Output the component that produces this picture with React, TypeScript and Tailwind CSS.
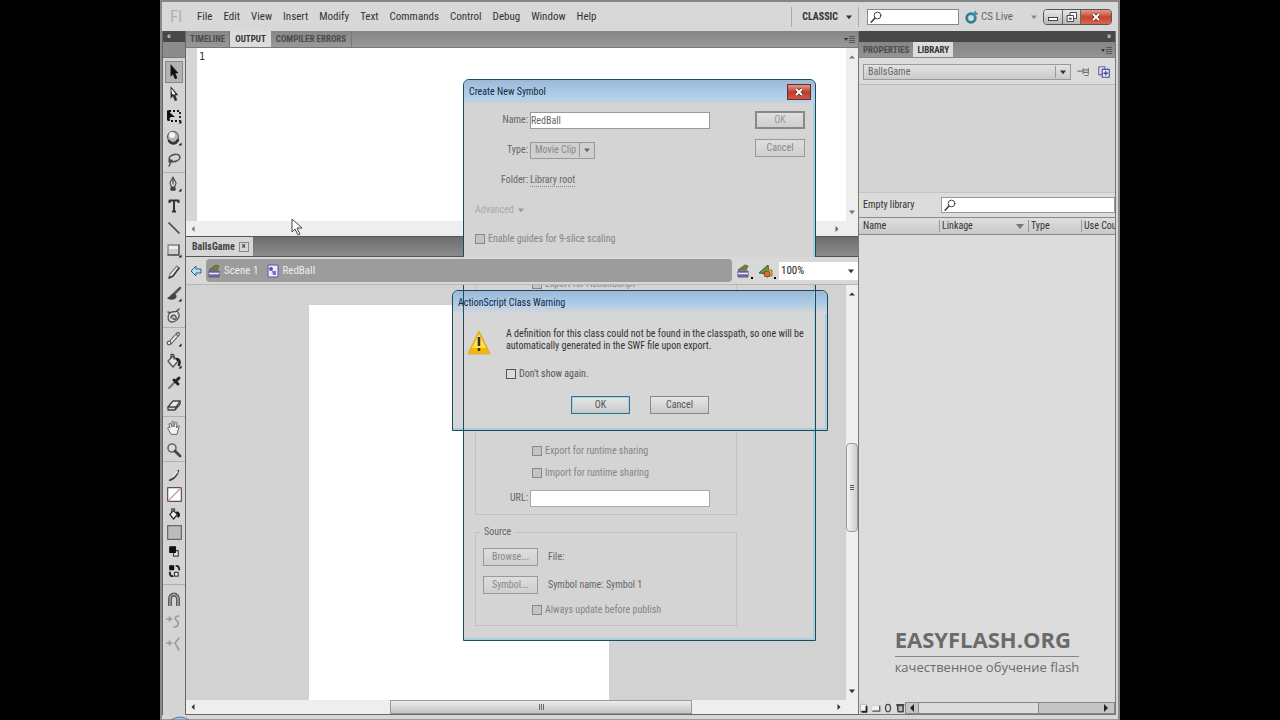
import type { ReactNode } from 'react';

const menus = ['File', 'Edit', 'View', 'Insert', 'Modify', 'Text', 'Commands', 'Control', 'Debug', 'Window', 'Help'];

function Svg({ children, className = 'h-4 w-4' }: { children: ReactNode; className?: string }) {
  return (
    <svg viewBox="0 0 16 16" className={className} fill="none" stroke="#444" strokeWidth="1.3" strokeLinecap="round" strokeLinejoin="round" aria-hidden="true">
      {children}
    </svg>
  );
}

const arrowPoints = {
  left: '6,0 6,8 2,4',
  right: '2,0 2,8 6,4',
  up: '0,6 8,6 4,2',
  down: '0,2 8,2 4,7',
};

function Arrow({ dir, className = 'h-1.5 w-1.5 text-[#333]' }: { dir: keyof typeof arrowPoints; className?: string }) {
  return (
    <svg viewBox="0 0 8 8" className={`shrink-0 ${className}`} aria-hidden="true">
      <polygon points={arrowPoints[dir]} fill="currentColor" />
    </svg>
  );
}

function PanelMenu() {
  return (
    <button aria-label="Panel menu" className="ml-auto mr-0.5">
      <svg viewBox="0 0 12 8" className="h-2 w-3" aria-hidden="true">
        <path d="M0 3h4L2 6z" fill="#333" />
        <path d="M5 1.5h6M5 3.5h6M5 5.5h6M5 7.5h6" stroke="#555" />
      </svg>
    </button>
  );
}

function SearchIcon() {
  return (
    <Svg className="h-3 w-3 shrink-0">
      <circle cx="10" cy="6" r="4.5" />
      <path d="M6.5 9.5L1.5 15" strokeWidth="2" />
    </Svg>
  );
}

function CloseCross() {
  return (
    <svg viewBox="0 0 10 8" className="h-2 w-2.5" aria-hidden="true">
      <path d="M2 1l6 6M8 1L2 7" stroke="#5a2020" strokeWidth="3.4" />
      <path d="M2 1l6 6M8 1L2 7" stroke="#fff" strokeWidth="2" />
    </svg>
  );
}

/* Top menu bar */
function MenuBar() {
  return (
    <header className="flex h-[31px] shrink-0 items-center border-t-2 border-[#858585] bg-[#d8d8d8] pr-1.5 pl-2">
      <span className="w-[27px] text-[17px] text-[#b0b0b0]">Fl</span>
      <nav className="flex gap-[11px] text-[11px] text-[#333]">
        {menus.map((m) => (
          <button key={m}>{m}</button>
        ))}
      </nav>
      <div className="ml-auto flex items-center">
        <button className="flex h-5 items-center gap-2 border-x border-[#aaa] pr-1.5 pl-2.5 text-[10px] font-bold text-[#333]">
          CLASSIC <Arrow dir="down" />
        </button>
        <label className="ml-2 flex h-4 w-[92px] items-center border border-[#888] bg-white pl-0.5">
          <SearchIcon />
          <input aria-label="Search help" className="w-full min-w-0 outline-none" />
        </label>
        <button className="ml-1.5 flex items-center gap-0.5 text-[11px] text-[#666]">
          <svg viewBox="0 0 14 14" className="h-3.5 w-3.5" aria-hidden="true">
            <circle cx="6" cy="8" r="4.3" fill="none" stroke="#2b8298" strokeWidth="2.8" />
            <path d="M10 1l1 2 2 .5-2 1-1 2-.6-2z" fill="#3c95b5" stroke="#3c95b5" />
          </svg>
          <span>CS Live</span>
          <Arrow dir="down" className="ml-4 h-1.5 w-1.5 text-[#888]" />
        </button>
        <div className="ml-1.5 flex h-4 overflow-hidden rounded-sm border border-[#555]">
          <button aria-label="Minimize" className="flex w-[18px] items-center justify-center bg-linear-to-b from-[#e8e8e8] to-[#b8b8b8]">
            <span className="mt-1 h-1 w-2.5 border border-[#444] bg-white" />
          </button>
          <button aria-label="Restore" className="flex w-[19px] items-center justify-center border-x border-[#666] bg-linear-to-b from-[#e8e8e8] to-[#b8b8b8]">
            <Svg className="h-3 w-3">
              <path d="M6 2h8v8H6z" fill="#fff" />
              <path d="M2 6h8v8H2z" fill="#fff" />
              <path d="M5 9.5h2v1.500H5z" />
            </Svg>
          </button>
          <button aria-label="Close" className="flex w-[30px] items-center justify-center bg-linear-to-b from-[#dc9a8c] via-[#c8432c] to-[#d6684e]">
            <CloseCross />
          </button>
        </div>
      </div>
    </header>
  );
}

function Corner() {
  return <path d="M15.500 12.500v3h-3z" fill="#111" stroke="none" />;
}

const toolGroups: { name: string; icon: ReactNode }[][] = [
  [
    { name: 'Selection', icon: <path d="M5 1l7 8H9l2 5-2 .8L7 10l-2 2z" fill="#111" stroke="#111" strokeWidth=".6" /> },
    { name: 'Subselection', icon: <><path d="M5 1l7 8H9l2 5-2 .8L7 10l-2 2z" fill="#222" strokeWidth=".6" /><path d="M6 4l3 4H7z" fill="#fff" stroke="#fff" strokeWidth="1" /></> },
    { name: 'Free Transform', icon: <><path d="M3 3h11v10H3z" strokeDasharray="2 2" strokeLinecap="butt" stroke="#111" strokeWidth="1.800" /><path d="M1 2l8 7H5l-4 4z" fill="#111" stroke="none" /><Corner /></> },
    { name: '3D Rotation', icon: <><circle cx="7" cy="7" r="5.500" fill="#b5b5b5" stroke="#666" /><circle cx="6" cy="5" r="3" fill="#f4f4f4" stroke="none" /><path d="M3 11c3 4 7 3 9-1" stroke="#333" strokeWidth="2.500" /><Corner /></> },
    { name: 'Lasso', icon: <><ellipse cx="8.500" cy="6" rx="5.500" ry="3.500" transform="rotate(-15 8.500 6)" stroke="#555" strokeWidth="1.600" /><path d="M4 8c-2 1-1 3 1 2s1-2-.500-2M4 10c1 2 0 3-1 4" /></> },
  ],
  [
    { name: 'Pen', icon: <><path d="M7 1l3 6-1.500 4h-3L4 7z" fill="#eee" stroke="#555" /><path d="M7 3v5" /><path d="M5 12h4v2H5z" fill="#333" /><Corner /></> },
    { name: 'Text', icon: <path d="M3.500 5V2.500h9V5M8 3v10.500M6 13.500h4" stroke="#333" strokeWidth="2" strokeLinecap="butt" /> },
    { name: 'Line', icon: <path d="M3 3l10 10" strokeWidth="1.600" /> },
    { name: 'Rectangle', icon: <><path d="M2 3h11v10H2z" fill="#ccc" stroke="#888" /><path d="M3 4h9v3H3z" fill="#eee" stroke="none" /><path d="M2 13h11V3" stroke="#555" /><Corner /></> },
    { name: 'Pencil', icon: <><path d="M3 14l1-4 7-8 2 2-6 8z" fill="#eee" stroke="#888" /><path d="M3 14l4-2 6-8" stroke="#333" strokeWidth="1.400" /></> },
    { name: 'Brush', icon: <><path d="M14 2L8 8" strokeWidth="2.500" stroke="#555" /><path d="M8 8c-3 0-3 4-6 4 3 2 8 1 8-2z" fill="#444" /><Corner /></> },
    { name: 'Deco', icon: <><path d="M3 6c2-4 5-1 8-3l2 3c1 5-4 8-7 8-4 0-5-5-3-8z" fill="#ddd" stroke="#555" /><path d="M5 10c0-3 4-4 5-1s-3 3-3 1M11 3l2-2M4 5L2 4" stroke="#555" strokeWidth="1.500" /></> },
  ],
  [
    { name: 'Bone', icon: <><path d="M4 12l7-8" stroke="#555" strokeWidth="4" /><path d="M4 12l7-8" stroke="#e6e6e6" strokeWidth="2" /><circle cx="12" cy="3" r="1.500" fill="#eee" stroke="#666" /><circle cx="3" cy="12" r="1.800" fill="#eee" stroke="#666" /><Corner /></> },
    { name: 'Paint Bucket', icon: <><path d="M2 8l5-5 5 5-5 6z" fill="#e6e6e6" stroke="#555" /><path d="M5 5V2c0-1 3-1 3 1v3" /><path d="M11 6c3 1 3 3 2 6" stroke="#222" strokeWidth="2.500" /><Corner /></> },
    { name: 'Eyedropper', icon: <><path d="M3 13l6-6" strokeWidth="2" stroke="#777" /><path d="M8 5l4 4M10 6l3-3" stroke="#222" strokeWidth="3" /></> },
    { name: 'Eraser', icon: <><path d="M2 10l5-6h7l-4 6z" fill="#eee" /><path d="M2 10v3h7l5-6V4M10 10l-1 3" /></> },
  ],
  [
    { name: 'Hand', icon: <path d="M5 14L2 9c-1-2 1-2 2-1L3 4c0-1 1.500-1 2 0l1 3V2c0-1 2-1 2 0v5l1-4c0-1 2-1 2 0l-.500 5 1.500-2c1-1 2 0 1 1l-2 7z" fill="#f3f3f3" strokeWidth="1" stroke="#666" /> },
    { name: 'Zoom', icon: <><circle cx="6" cy="6" r="4" fill="#ddd" stroke="#666" strokeWidth="1.600" /><path d="M9 9l5 5" strokeWidth="2.800" /></> },
  ],
  [
    { name: 'Stroke Color', icon: <><path d="M3 13c4-1 8-5 9-10" strokeWidth="2" /><path d="M7 9l4-5" stroke="#eee" /></> },
    { name: 'Stroke Swatch', icon: <><path d="M.700.700h14.600v14.600H.700z" fill="#fff" stroke="#555" /><path d="M1 15L15 1" stroke="#c98b91" /></> },
    { name: 'Fill Color', icon: <><path d="M3 9l4-4 4 4-4 5z" fill="#eee" stroke="#222" /><path d="M5 6V3h3v3" /><path d="M11 7c2 1 2 3 1 4" stroke="#111" strokeWidth="2.500" /></> },
    { name: 'Fill Swatch', icon: <path d="M.700.700h14.600v14.600H.700z" fill="#bcbcbc" stroke="#666" /> },
    { name: 'Black and White', icon: <><path d="M7 7h5v6H7z" fill="#eee" /><path d="M3 3h6v6H3z" fill="#111" stroke="#111" /></> },
    { name: 'Swap Colors', icon: <><path d="M3 3h4v4H3z" fill="#111" stroke="#111" /><path d="M8 10h4v4H8z" fill="#eee" /><path d="M10 3c3 0 3 3 3 4M3 10c0 3 1 4 3 4" stroke="#222" strokeWidth="2" /></> },
  ],
  [
    { name: 'Snap to Objects', icon: <><path d="M4 14V7c0-6 8-6 8 0v7" stroke="#5c5c5c" strokeWidth="4" strokeLinecap="butt" /><path d="M4 14V7c0-6 8-6 8 0v7" stroke="#c4c4c4" strokeWidth="1" /></> },
    { name: 'Smooth', icon: <path d="M1 5h5M3.500 3v4M13 2c-5 0-4 4-2 5s2 6-3 6" stroke="#999" strokeWidth="1.600" /> },
    { name: 'Straighten', icon: <path d="M1 7h5M3.500 5v4M13 2L9 7l4 7" stroke="#999" strokeWidth="1.600" /> },
  ],
];

/* Vertical tool strip */
function Toolbar() {
  return (
    <aside className="flex w-6 shrink-0 flex-col border-x border-[#666] bg-[#d4d4d4]">
      <div className="h-[11px] bg-[#484848] pl-1 text-[9px] leading-[10px] font-bold text-[#ddd]">«</div>
      <div className="h-4 border-b border-[#777] bg-[#8c8c8c]" />
      <div className="pt-[3px]">
        {toolGroups.map((group, g) => (
          <div key={g} className={g === 0 ? 'pb-px' : g > 3 ? 'border-t border-[#b0b0b0] py-1' : 'border-t border-[#b0b0b0]'}>
            {group.map((tool) => (
              <button
                key={tool.name}
                aria-label={tool.name}
                className={`mx-auto flex w-[18px] items-center justify-center ${g === 4 ? 'h-[19px]' : 'h-[22px]'} ${tool.name === 'Selection' ? 'border border-[#888] bg-[#b2b2b2]' : ''}`}
              >
                <Svg className={g === 4 ? 'h-[15px] w-[15px]' : 'h-4 w-4 shrink-0'}>{tool.icon}</Svg>
              </button>
            ))}
          </div>
        ))}
      </div>
    </aside>
  );
}

function OutputPanel() {
  return (
    <section className="flex h-[206px] shrink-0 flex-col">
      <div role="tablist" className="flex h-[17px] items-stretch border-b border-[#777] bg-linear-to-b from-[#868686] to-[#999] text-[9px] font-bold text-[#4c4c4c]">
        <button role="tab" className="border-r border-[#777] px-1">TIMELINE</button>
        <button role="tab" aria-selected="true" className="bg-[#dcdcdc] px-[5px] text-[#333]">OUTPUT</button>
        <button role="tab" className="border-r border-[#777] px-[5px]">COMPILER ERRORS</button>
        <PanelMenu />
      </div>
      <div className="flex min-h-0 flex-1">
        <div className="w-[11px] bg-[#d6d6d6]" />
        <pre className="flex-1 bg-white pt-1 pl-0.5 font-['DejaVu_Sans_Mono',monospace] text-[10px] text-[#333]">1</pre>
        <div className="flex w-3 flex-col items-center justify-between bg-[#eee] py-1.5">
          <Arrow dir="up" className="h-1.5 w-1.5 text-[#777]" />
          <Arrow dir="down" className="h-1.5 w-1.5 text-[#777]" />
        </div>
      </div>
      <div className="flex h-4 items-center justify-between border-b border-[#555] bg-[#eee] pr-[18px] pl-1">
        <Arrow dir="left" className="h-1.5 w-1.5 text-[#777]" />
        <Arrow dir="right" className="h-1.5 w-1.5 text-[#666]" />
      </div>
    </section>
  );
}

function Clapper() {
  return (
    <svg viewBox="0 0 16 16" className="h-4 w-4 shrink-0" aria-hidden="true">
      <path d="M3 7l7-5 3 1-2 4z" fill="#70833a" stroke="#5c6b32" />
      <path d="M3 8h10v6H3z" fill="#7168a8" stroke="#5c5695" />
      <path d="M3 10.500h10" stroke="#eee" strokeWidth="1.500" />
    </svg>
  );
}

function EditBar() {
  return (
    <div className="relative z-20 flex h-7 shrink-0 items-center border-b border-[#b9b6ab] bg-[#d8d8d8] text-[11px]">
      <button aria-label="Back" className="flex w-5 justify-center">
        <svg viewBox="0 0 12 12" className="h-3 w-3" aria-hidden="true">
          <path d="M1 6l5-5v3h5v4H6v3z" fill="#b9dcef" stroke="#2d6788" />
        </svg>
      </button>
      <div className="flex h-[23px] flex-1 items-center gap-0.5 rounded-sm bg-[#9c9c9c] text-[#eee]">
        <Clapper />
        <a href="#scene" className="mr-1.5">Scene 1</a>
        <svg viewBox="0 0 14 14" className="h-3.5 w-3.5" aria-hidden="true">
          <path d="M2 1h10v12H2z" fill="#e9e9f7" stroke="#5b57a8" />
          <circle cx="5" cy="5" r="2" fill="#5b57a8" />
          <path d="M6 7h4v4H7z" fill="#7773bd" />
        </svg>
        <a href="#redball">RedBall</a>
      </div>
      <div className="flex w-[47px] items-center justify-around">
        <button aria-label="Edit Scene" className="flex items-end"><Clapper /><span className="h-0.5 w-0.5 bg-black" /></button>
        <button aria-label="Edit Symbols" className="flex items-end">
          <svg viewBox="0 0 16 16" className="h-4 w-4" aria-hidden="true">
            <path d="M1 10l9-8 1 9z" fill="#5a9a45" stroke="#2f6a2d" />
            <path d="M7 7h7v6H7z" fill="#ddc341" stroke="#8b7425" />
            <circle cx="9" cy="11" r="3" fill="#d9712f" stroke="#8c4218" />
          </svg>
          <span className="h-0.5 w-0.5 bg-black" />
        </button>
      </div>
      <div className="flex h-[18px] w-[79px] items-center bg-white pr-1 pl-0.5">
        <select aria-label="Zoom" className="flex-1 appearance-none text-[#222] outline-none">
          <option>100%</option>
        </select>
        <Arrow dir="down" />
      </div>
    </div>
  );
}

function Stage() {
  return (
    <section className="flex min-h-0 flex-1 flex-col border-b border-[#666] bg-[#d2d2d2]">
      <div className="flex min-h-0 flex-1">
        <div className="flex flex-1 pt-5 pl-[123px]">
          <div className="w-[300px] bg-white" />
        </div>
        <div className="flex w-3 flex-col items-center bg-[#eee] pt-1.5 pb-1.5">
          <Arrow dir="up" />
          <div className="flex-[146]" />
          <div className="flex w-full flex-[88] flex-col items-center justify-center gap-px rounded-sm border border-[#999] bg-linear-to-r from-[#f4f4f4] to-[#cfcfcf]">
            <span className="h-px w-1 bg-[#555]" />
            <span className="h-px w-1 bg-[#555]" />
            <span className="h-px w-1 bg-[#555]" />
          </div>
          <div className="flex-[156]" />
          <Arrow dir="down" />
        </div>
      </div>
      <div className="flex h-3.5 items-center bg-[#eee] pr-4 pl-1">
        <Arrow dir="left" />
        <div className="flex-[195]" />
        <div className="flex h-3.5 flex-[301] items-center justify-center gap-px border border-[#999] bg-linear-to-b from-[#eee] to-[#c4c4c4]">
          <span className="h-1.5 w-px bg-[#666]" />
          <span className="h-1.5 w-px bg-[#666]" />
          <span className="h-1.5 w-px bg-[#666]" />
        </div>
        <div className="flex-[144]" />
        <Arrow dir="right" />
      </div>
    </section>
  );
}

function LibraryPanel() {
  return (
    <aside className="flex w-[258px] shrink-0 flex-col border-x border-b border-[#777] bg-[#dcdcdc] text-[10px] text-[#333]">
      <div className="h-[11px] bg-[#484848] pr-1 text-right text-[9px] leading-[10px] font-bold text-[#ddd]">»</div>
      <div role="tablist" className="flex h-4 items-stretch border-b border-[#888] bg-linear-to-b from-[#868686] to-[#949494] text-[9px] font-bold text-[#4c4c4c]">
        <button role="tab" className="px-1 pt-0.5">PROPERTIES</button>
        <button role="tab" aria-selected="true" className="bg-[#dcdcdc] px-1 pt-0.5 text-[#333]">LIBRARY</button>
        <PanelMenu />
      </div>
      <div className="flex h-[27px] items-center border-b border-[#bbb] px-1 pt-0.5">
        <div className="flex h-4 flex-1 items-center border border-[#999] bg-linear-to-b from-[#e2e2e2] to-[#cbcbcb] pr-1 pl-1">
          <select aria-label="Library document" className="flex-1 appearance-none text-[#666] outline-none">
            <option>BallsGame</option>
          </select>
          <span className="mr-1 h-3 w-px bg-[#999]" />
          <Arrow dir="down" />
        </div>
        <button aria-label="Pin library" className="ml-1.5">
          <Svg className="h-3.5 w-3.5"><path d="M1 7h6M7 4v6M7 5.500h6M7 8.500h6M13 4v6M9 12h4" stroke="#777" /></Svg>
        </button>
        <button aria-label="New library panel" className="ml-1.5">
          <Svg className="h-3.5 w-3.5"><path d="M2 2h7v9H2z" fill="#ddd" stroke="#6a6ab0" /><path d="M6 5h8v9H6z" fill="#eeeef8" stroke="#4848a0" /><path d="M8 9.500h4M10 7.500v4" stroke="#4848a0" strokeWidth="1.600" /></Svg>
        </button>
      </div>
      <div className="h-[107px] bg-[#d4d4d4]" />
      <div className="flex h-[25px] items-center justify-between border-t border-[#c4c4c4] pl-1">
        <span>Empty library</span>
        <label className="flex h-4 w-[174px] items-center border border-[#999] bg-white pl-0.5">
          <SearchIcon />
          <input aria-label="Search library" className="w-full min-w-0 outline-none" />
        </label>
      </div>
      <table className="w-full table-fixed border-y border-[#888] bg-linear-to-b from-[#dedede] to-[#c8c8c8] text-left">
        <thead>
          <tr className="h-4 leading-4">
            <th className="w-[80px] pl-1 font-normal">Name</th>
            <th className="w-[89px] font-normal">
              <div className="flex h-3 items-center justify-between border-l border-[#999] pr-1 pl-0.5">Linkage <Arrow dir="down" className="h-2 w-2 text-[#777]" /></div>
            </th>
            <th className="w-[53px] font-normal">
              <div className="flex h-3 items-center border-l border-[#999] pl-0.5">Type</div>
            </th>
            <th className="font-normal">
              <div className="flex h-3 items-center overflow-hidden border-l border-[#999] pl-0.5 whitespace-nowrap">Use Count</div>
            </th>
          </tr>
        </thead>
      </table>
      <div className="flex flex-1 flex-col items-center justify-end pb-[25px] font-['Open_Sans',sans-serif] text-[#6b6b6b]">
        <div>
          <p className="mb-1.5 text-[22px] leading-[22px] font-bold">EASYFLASH.ORG</p>
          <p className="border-t border-[#888] text-[13px] leading-5">качественное обучение flash</p>
        </div>
      </div>
      <div className="flex h-3 items-center">
        <button aria-label="New symbol" className="w-3"><Svg className="h-2.5 w-2.5"><path d="M3 2h9v12H3z" fill="#f4f4f4" stroke="#aaa" /><path d="M12 6v8H5" stroke="#222" strokeWidth="3" /></Svg></button>
        <button aria-label="New folder" className="w-3"><Svg className="h-2.5 w-2.5"><path d="M1 4h13v9H1z" fill="#eee" stroke="#ccc" /><path d="M14 5v8H3" stroke="#555" strokeWidth="2" /></Svg></button>
        <button aria-label="Item properties" className="w-3"><Svg className="h-2.5 w-2.5"><ellipse cx="8" cy="8" rx="4" ry="6" strokeWidth="2" /></Svg></button>
        <button aria-label="Delete" className="w-2.5"><Svg className="h-2.5 w-2.5"><path d="M4 4h9v10H5zM3 3h11" fill="#bbb" strokeWidth="2.500" /></Svg></button>
        <div className="flex h-3 flex-1 items-center border border-[#888] bg-[#c4c4c4] pr-1">
          <span className="flex h-full w-3 items-center justify-center"><Arrow dir="left" className="h-2 w-2 text-[#222]" /></span>
          <span className="h-full flex-[124] border-x border-[#888] bg-[#dcdcdc]" />
          <span className="flex-[66]" />
          <Arrow dir="right" className="h-2 w-2 text-[#222]" />
        </div>
      </div>
    </aside>
  );
}

function CheckRow({ id, label, className }: { id: string; label: string; className: string }) {
  return (
    <div className={`flex items-center gap-[3px] text-[#858585] ${className}`}>
      <input id={id} type="checkbox" disabled className="h-2.5 w-2.5 appearance-none border border-[#888] bg-[#c4c4c4]" />
      <label htmlFor={id}>{label}</label>
    </div>
  );
}

/* Create New Symbol */
function SymbolDialog() {
  const grayButton = 'h-[18px] border border-[#999] bg-linear-to-b from-[#dedede] to-[#cfcfcf] text-[#888]';
  return (
    <div role="dialog" aria-label="Create New Symbol" className="absolute top-[79px] left-[301px] z-10 w-[353px] rounded-t-md border border-[#1f4a5c] bg-[#d4d4d4] text-[10px] leading-3.5 text-[#666] shadow-[inset_-2px_-2px_0_#a5d0dc]">
      <div className="mb-0.5 flex h-[23px] items-center justify-between rounded-t-md bg-linear-to-b from-[#9db8d6] via-[#a9cbe8] to-[#bdd4e8] pr-1 pl-[5px] text-[#12283f]">
        Create New Symbol
        <button aria-label="Close" className="flex h-4 w-6 items-center justify-center border border-[#6b2a2a] bg-linear-to-b from-[#dc9a8c] via-[#c03a2c] to-[#cc5844]">
          <CloseCross />
        </button>
      </div>
      <div className="flex">
        <div className="flex-1">
          <div className="flex h-[30px] items-center gap-0.5">
            <label htmlFor="name" className="w-16 text-right">Name:</label>
            <input id="name" defaultValue="RedBall" className="h-[17px] w-[180px] border border-[#999] bg-white outline-none" />
          </div>
          <div className="flex h-[30px] items-center gap-0.5">
            <label htmlFor="type" className="w-16 text-right">Type:</label>
            <div className="flex h-[17px] items-center border border-[#999] bg-[#d0d0d0] pr-1 pl-1">
              <select id="type" disabled className="w-11 appearance-none text-[#888] opacity-100">
                <option>Movie Clip</option>
              </select>
              <span className="mr-1 h-3.5 w-px bg-[#999]" />
              <Arrow dir="down" className="h-1.5 w-1.5 text-[#666]" />
            </div>
          </div>
          <div className="flex h-[30px] items-center gap-0.5">
            <span className="w-16 text-right">Folder:</span>
            <a href="#folder" className="border-b border-dotted border-[#888] leading-3">Library root</a>
          </div>
          <button className="ml-[11px] flex h-[30px] items-center gap-1 text-[#aaa]">
            Advanced <Arrow dir="down" className="h-1.5 w-1.5 text-[#999]" />
          </button>
        </div>
        <div className="flex flex-col gap-2.5 pt-1.5 pr-2.5">
          <button disabled className="h-[18px] w-[50px] border-2 border-[#888] bg-linear-to-b from-[#dedede] to-[#cfcfcf] leading-3 text-[#999]">OK</button>
          <button disabled className={`w-[50px] ${grayButton}`}>Cancel</button>
        </div>
      </div>
      <CheckRow id="slice" label="Enable guides for 9-slice scaling" className="h-7 pl-[11px]" />
      <fieldset className="mt-1 mr-[78px] ml-[11px] h-[160px] border border-[#c2c2c2] pt-0.5">
        <legend className="ml-1 px-1">Linkage</legend>
        <CheckRow id="as" label="Export for ActionScript" className="h-[22px] pl-[56px]" />
      </fieldset>
      <fieldset className="mr-[78px] ml-[11px] h-[98px] border border-[#c2c2c2] pt-[9px]">
        <legend className="ml-1 px-1">Sharing</legend>
        <CheckRow id="exp" label="Export for runtime sharing" className="h-[22px] pl-[56px]" />
        <CheckRow id="imp" label="Import for runtime sharing" className="h-[22px] pl-[56px]" />
        <div className="flex h-7 items-center gap-0.5">
          <label htmlFor="url" className="w-[52px] text-right">URL:</label>
          <input id="url" disabled className="h-[17px] w-[180px] border border-[#aaa] bg-white" />
        </div>
      </fieldset>
      <fieldset className="mt-2.5 mr-[78px] mb-3.5 ml-[11px] border border-[#c2c2c2] pb-1">
        <legend className="ml-1 px-1">Source</legend>
        <div className="mt-1 flex h-7 items-center gap-2.5 pl-[7px]">
          <button disabled className={`w-[55px] ${grayButton}`}>Browse...</button> File:
        </div>
        <div className="flex h-7 items-center gap-2.5 pl-[7px]">
          <button disabled className={`w-[55px] ${grayButton}`}>Symbol...</button> Symbol name: Symbol 1
        </div>
        <CheckRow id="always" label="Always update before publish" className="h-[22px] pl-[56px]" />
      </fieldset>
    </div>
  );
}

/* ActionScript Class Warning */
function WarningDialog() {
  return (
    <div role="alertdialog" aria-label="ActionScript Class Warning" className="absolute top-[290px] left-[290px] z-30 w-[376px] rounded-t-md border border-[#1f4a5c] bg-[#d6d6d6] pb-4 text-[10px] leading-3 text-[#333] shadow-[inset_-2px_-2px_0_#a5d0dc]">
      <div className="flex h-[23px] items-center rounded-t-md bg-linear-to-b from-[#9db8d6] via-[#a9cbe8] to-[#d6d6d6] pl-[5px] text-[#12283f]">
        ActionScript Class Warning
      </div>
      <div className="flex pt-3.5 pl-3.5">
        <svg viewBox="0 0 24 26" className="mt-0.5 h-[26px] w-6 shrink-0" aria-hidden="true">
          <path d="M12 2L22.500 23.500h-21z" fill="#f5b800" stroke="#e8b030" strokeWidth="2" strokeLinejoin="round" />
          <path d="M12 4L19 18H5z" fill="#ffe04a" />
          <path d="M12 7v9M12 18v3" stroke="#333" strokeWidth="2.500" />
        </svg>
        <div className="pl-[15px]">
          <p className="w-[306px]">A definition for this class could not be found in the classpath, so one will be automatically generated in the SWF file upon export.</p>
          <div className="mt-4 flex items-center gap-[3px] text-[#555]">
            <input id="again" type="checkbox" className="h-2.5 w-2.5 appearance-none border border-[#555] bg-[#dcdcdc]" />
            <label htmlFor="again">Don't show again.</label>
          </div>
        </div>
      </div>
      <div className="mt-4 flex justify-center gap-5">
        <button className="h-[18px] w-[59px] border border-[#3a6f92] bg-linear-to-b from-[#e6e6e6] to-[#cacaca] text-[#555] shadow-[inset_0_0_0_1px_#a8cde0]">OK</button>
        <button className="h-[18px] w-[59px] border border-[#888] bg-linear-to-b from-[#e6e6e6] to-[#cacaca] text-[#555]">Cancel</button>
      </div>
      {/* frame of the window behind */}
      <div className="pointer-events-none absolute inset-y-0 left-[10px] w-[353px] border-x border-[#1f4a5c] shadow-[inset_-1px_0_0_#a5d0dc]" />
    </div>
  );
}

export default function App() {
  return (
    <div className="flex h-screen bg-black px-40 font-['Roboto_Condensed','Liberation_Sans_Narrow',Lato,sans-serif] leading-none">
      <div className="relative flex min-w-0 flex-1 flex-col overflow-hidden border-x-2 border-[#8a8a8a] bg-[#d6d6d6]">
        <MenuBar />
        <main className="flex min-h-0 flex-1 border-b border-[#999] pr-0.5 pb-1">
          <Toolbar />
          <div className="flex min-w-0 flex-1 flex-col">
            <OutputPanel />
            <div className="flex h-5 shrink-0 items-stretch border-b border-[#555] bg-linear-to-b from-[#6e6e6e] to-[#8c8c8c]">
              <div className="flex items-center gap-1 bg-[#d6d6d6] pr-1 pl-1.5 text-[10px] font-bold text-[#444]">
                BallsGame
                <button aria-label="Close document" className="flex h-2.5 w-2.5 items-center justify-center border border-[#888] text-[9px]">×</button>
              </div>
            </div>
            <EditBar />
            <Stage />
          </div>
          <LibraryPanel />
        </main>
        <SymbolDialog />
        <WarningDialog />
        <svg viewBox="0 0 20 4" className="absolute bottom-0 left-2 h-1 w-5" aria-hidden="true">
          <path d="M1 4Q10-2 19 4z" fill="#a9c3dc" stroke="#5c7896" />
        </svg>
        <svg viewBox="0 0 12 18" className="absolute top-[218px] left-[129px] z-40 h-[18px] w-3" aria-hidden="true">
          <path d="M1 1v13l3-3 3 6 2-1-3-6h5z" fill="#fff" stroke="#444" />
        </svg>
      </div>
    </div>
  );
}
